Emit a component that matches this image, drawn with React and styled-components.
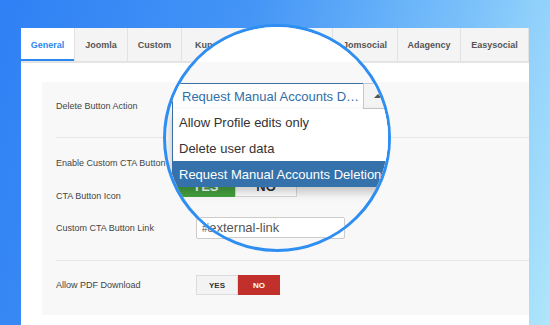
import React from 'react';
import styled, { createGlobalStyle, css } from 'styled-components';

const GlobalStyle = createGlobalStyle`
  body {
    margin: 0;
    font-family: "Liberation Sans", Arial, sans-serif;
  }
  * {
    box-sizing: border-box;
  }
`;

const Page = styled.div`
  position: relative;
  width: 550px;
  height: 325px;
  overflow: hidden;
  padding: 28px 0 0 21px;
  background: linear-gradient(105deg, #2f80f4 0%, #4495f6 40%, #7cc2fa 75%, #b0e6fc 100%);
`;

const Panel = styled.div`
  width: 508px;
  height: 297px;
  background: #fff;
`;

const TabBar = styled.div`
  display: flex;
  height: 35px;
  background: #f4f4f4;
  border-bottom: 2px solid #e4e4e4;
`;

const Tab = styled.div`
  display: flex;
  align-items: center;
  justify-content: center;
  flex: none;
  font-size: 9px;
  font-weight: bold;
  color: #555;
  border-right: 1px solid #e2e2e2;
  ${({ $active }) =>
    $active &&
    css`
      background: #fff;
      color: #2b88ee;
      box-shadow: inset 0 -2px 0 #2b88ee;
    `}
`;

const Content = styled.div`
  padding: 19px 0 0 21px;
`;

const Box = styled.div`
  height: 233px;
  background: #f8f8f8;
  padding-left: 14px;
`;

const Section = styled.div`
  padding: ${({ $pad }) => $pad};
  border-bottom: ${({ $last }) => ($last ? 'none' : '1px solid #e6e6e6')};
`;

const Row = styled.div`
  display: grid;
  grid-template-columns: 140px 1fr;
  align-items: center;
  height: ${({ $h }) => $h}px;
`;

const Label = styled.div`
  font-size: 9px;
  color: #444;
  white-space: nowrap;
`;

const Toggle = styled.div`
  display: flex;
  height: 20px;
`;

const ToggleButton = styled.div`
  display: flex;
  align-items: center;
  justify-content: center;
  width: 42px;
  font-size: 8px;
  font-weight: bold;
  color: ${({ $on }) => ($on ? '#fff' : '#333')};
  background: ${({ $on, $color }) => ($on ? $color : '#f3f3f3')};
  border: 1px solid ${({ $on, $color }) => ($on ? $color : '#dcdcdc')};
`;

const Input = styled.div`
  display: flex;
  align-items: center;
  width: 149px;
  height: 21px;
  padding-left: 5px;
  font-size: 10px;
  color: #555;
  background: #fff;
  border: 1px solid #ccc;
  border-radius: 2px;
`;

const SmallSelect = styled.div`
  width: 150px;
  height: 20px;
  background: #fff;
  border: 1px solid #ccc;
`;

/* magnifier lens over the page */
const Lens = styled.div`
  position: absolute;
  left: 163px;
  top: 24px;
  width: 228px;
  height: 228px;
  border: 3px solid #2e8ef2;
  border-radius: 50%;
  overflow: hidden;
  background: #f8f8f8;
`;

const LensTop = styled.div`
  height: 35px;
  background: #fff;
`;

const LensBody = styled.div`
  display: flex;
  flex-direction: column;
  align-items: flex-start;
`;

const SelectWrap = styled.div`
  position: relative;
  display: flex;
  margin: 21px 0 0 6px;
  height: 26px;
`;

const SelectValue = styled.div`
  display: flex;
  align-items: center;
  width: 191px;
  padding-left: 9px;
  font-size: 13px;
  color: #2f6ea9;
  white-space: nowrap;
  background: #fff;
  border-top: 1px solid #3b6fa6;
  border-left: 1px solid #3b6fa6;
`;

const Caret = styled.div`
  display: flex;
  align-items: center;
  justify-content: center;
  width: 30px;
  background: #f4f4f4;
  border: 1px solid #c8c8c8;
  &::after {
    content: '';
    border-left: 4px solid transparent;
    border-right: 4px solid transparent;
    border-bottom: 4px solid #555;
  }
`;

const Menu = styled.div`
  position: absolute;
  top: 26px;
  left: 0;
  width: 226px;
  background: #fff;
  border-left: 1px solid #3b6fa6;
  box-shadow: 0 5px 9px rgba(0, 0, 0, 0.22);
  z-index: 2;
`;

const Option = styled.div`
  display: flex;
  align-items: center;
  height: ${({ $h }) => $h}px;
  padding-left: 6px;
  font-size: 13px;
  white-space: nowrap;
  color: ${({ $selected }) => ($selected ? '#fff' : '#333')};
  background: ${({ $selected }) => ($selected ? '#3571aa' : '#fff')};
`;

const LensToggle = styled.div`
  display: flex;
  height: 24px;
  margin: 64px 0 0 10px;
`;

const LensButton = styled.div`
  display: flex;
  align-items: center;
  justify-content: center;
  width: ${({ $w }) => $w}px;
  padding-top: 2px;
  font-size: 13px;
  font-weight: bold;
  color: ${({ $on }) => ($on ? '#fff' : '#333')};
  background: ${({ $on }) => ($on ? '#45a13f' : '#fff')};
  border: 1px solid ${({ $on }) => ($on ? '#45a13f' : '#d8d8d8')};
`;

const LensInput = styled(Input)`
  margin: 20px 0 0 30px;
  font-size: 13px;
`;

const tabs = [
  ['General', 54],
  ['Joomla', 53],
  ['Custom', 54],
  ['Kupon Manager', 95],
  ['Sobipro', 56],
  ['Jomsocial', 65],
  ['Adagency', 63],
  ['Easysocial', 68],
];

const YesNo = ({ value }) => (
  <Toggle>
    <ToggleButton $on={value} $color="#45a13f">YES</ToggleButton>
    <ToggleButton $on={!value} $color="#c2302b">NO</ToggleButton>
  </Toggle>
);

export default function App() {
  return (
    <>
      <GlobalStyle />
      <Page>
        <Panel>
          <TabBar>
            {tabs.map(([name, w], i) => (
              <Tab key={name} $active={i === 0} style={{ width: w }}>
                {name}
              </Tab>
            ))}
          </TabBar>
          <Content>
            <Box>
              <Section $pad="9px 0 16px">
                <Row $h={30}>
                  <Label>Delete Button Action</Label>
                  <SmallSelect />
                </Row>
              </Section>
              <Section $pad="9px 0 17px">
                <Row $h={32}>
                  <Label>Enable Custom CTA Button</Label>
                  <YesNo value />
                </Row>
                <Row $h={34}>
                  <Label>CTA Button Icon</Label>
                  <SmallSelect />
                </Row>
                <Row $h={30}>
                  <Label>Custom CTA Button Link</Label>
                  <Input>#external-link</Input>
                </Row>
              </Section>
              <Section $pad="8px 0 14px" $last>
                <Row $h={32}>
                  <Label>Allow PDF Download</Label>
                  <YesNo value={false} />
                </Row>
              </Section>
            </Box>
          </Content>
        </Panel>

        <Lens>
          <LensTop />
          <LensBody>
            <SelectWrap>
              <SelectValue>Request Manual Accounts D…</SelectValue>
              <Caret />
              <Menu>
                <Option $h={26}>Allow Profile edits only</Option>
                <Option $h={26}>Delete user data</Option>
                <Option $h={26} $selected>
                  Request Manual Accounts Deletion
                </Option>
              </Menu>
            </SelectWrap>
            <LensToggle>
              <LensButton $w={59} $on>
                YES
              </LensButton>
              <LensButton $w={62}>NO</LensButton>
            </LensToggle>
            <LensInput>#external-link</LensInput>
          </LensBody>
        </Lens>
      </Page>
    </>
  );
}
